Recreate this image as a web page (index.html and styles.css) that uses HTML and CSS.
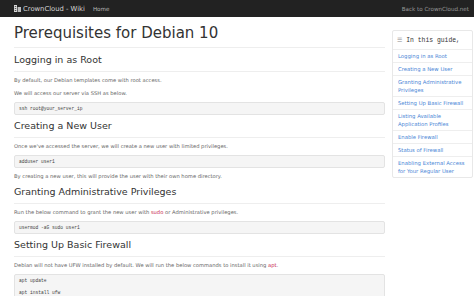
FILE: index.html
```html
<!DOCTYPE html>
<html lang="en">
<head>
    <meta charset="UTF-8">
    <meta name="viewport" content="width=device-width, initial-scale=1.0">
    <title>Prerequisites for Debian 10 - CrownCloud Wiki</title>
    <link rel="stylesheet" href="styles.css">
</head>
<body>
    <nav class="navbar">
        <a class="brand" href="#">
            <svg class="brand-icon" width="7" height="7" viewBox="0 0 7 7">
                <rect x="0" y="0" width="3" height="7" fill="#d8d8d8"/>
                <rect x="3.6" y="2" width="3.4" height="5" fill="#bdbdbd"/>
                <rect x="0.8" y="1" width="1.4" height="1" fill="#555"/>
                <rect x="0.8" y="3" width="1.4" height="1" fill="#555"/>
                <rect x="0.8" y="5" width="1.4" height="1" fill="#555"/>
            </svg>
            <span>CrownCloud - Wiki</span>
        </a>
        <a class="nav-link" href="#">Home</a>
        <a class="nav-link nav-right" href="#">Back to CrownCloud.net</a>
    </nav>

    <div class="page">
        <main class="content">
            <h1>Prerequisites for Debian 10</h1>

            <h2>Logging in as Root</h2>
            <p>By default, our Debian templates come with root access.</p>
            <p>We will access our server via SSH as below.</p>
            <pre>ssh root@your_server_ip</pre>

            <h2>Creating a New User</h2>
            <p>Once we've accessed the server, we will create a new user with limited privileges.</p>
            <pre>adduser user1</pre>
            <p>By creating a new user, this will provide the user with their own home directory.</p>

            <h2>Granting Administrative Privileges</h2>
            <p>Run the below command to grant the new user with <code>sudo</code> or Administrative privileges.</p>
            <pre>usermod -aG sudo user1</pre>

            <h2>Setting Up Basic Firewall</h2>
            <p>Debian will not have UFW installed by default. We will run the below commands to install it using <code>apt</code>.</p>
            <pre class="multi">apt update

apt install ufw</pre>
        </main>

        <aside class="toc">
            <div class="toc-title"><span class="toc-icon">&#9776;</span> In this guide,</div>
            <ul>
                <li><a href="#">Logging in as Root</a></li>
                <li><a href="#">Creating a New User</a></li>
                <li><a href="#">Granting Administrative Privileges</a></li>
                <li><a href="#">Setting Up Basic Firewall</a></li>
                <li><a href="#">Listing Available Application Profiles</a></li>
                <li><a href="#">Enable Firewall</a></li>
                <li><a href="#">Status of Firewall</a></li>
                <li><a href="#">Enabling External Access for Your Regular User</a></li>
            </ul>
        </aside>
    </div>
</body>
</html>
```

FILE: styles.css
```css
body {
    margin: 0;
    font-family: "DejaVu Sans", sans-serif;
    color: #666;
    background: #fff;
    overflow: hidden;
}
a {
    text-decoration: none;
}
.navbar {
    height: 17px;
    background-color: #222;
    display: flex;
    align-items: center;
    padding: 0 5px 0 14px;
}
.brand {
    display: flex;
    align-items: center;
    gap: 2px;
    color: #d6d6d6;
    font-size: 6.8px;
}
.brand-icon {
    display: block;
}
.nav-link {
    color: #bbb;
    font-size: 5.6px;
    margin-left: 8px;
}
.nav-right {
    margin-left: auto;
    color: #999;
}
.page {
    display: flex;
    gap: 7px;
    padding: 0 3px 0 14px;
}
.content {
    width: 371px;
    flex: none;
}
h1 {
    font-size: 15px;
    font-weight: normal;
    color: #333;
    line-height: 20px;
    margin: 6px 0 0;
    padding-bottom: 4px;
    border-bottom: 1px solid #eee;
}
h2 {
    font-size: 9.5px;
    font-weight: normal;
    color: #333;
    line-height: 14px;
    margin: 4px 0 4px;
    padding-bottom: 4px;
    border-bottom: 1px solid #eee;
}
h1 + h2 {
    margin-top: 5px;
}
p {
    font-size: 5.2px;
    line-height: 8px;
    margin: 0 0 5px;
}
pre {
    font-family: "Liberation Mono", monospace;
    font-size: 4.6px;
    line-height: 11px;
    color: #444;
    background: #f5f5f5;
    border: 1px solid #e3e3e3;
    border-radius: 2px;
    padding: 0 4px;
    margin: 0 0 4px;
}
pre.multi {
    line-height: 6px;
    padding: 3px 4px;
}
code {
    font-family: "DejaVu Sans", sans-serif;
    color: #c7254e;
    font-size: 5.2px;
}
.toc {
    width: 79px;
    flex: none;
    margin-top: 13px;
    align-self: flex-start;
    border: 1px solid #e8e8e8;
    border-radius: 2px;
}
.toc-title {
    font-family: "Liberation Mono", monospace;
    font-size: 6.4px;
    color: #333;
    line-height: 17px;
    padding-left: 4px;
    white-space: nowrap;
}
.toc-icon {
    font-family: "DejaVu Sans", sans-serif;
    color: #888;
    font-size: 6px;
}
.toc ul {
    list-style: none;
    margin: 0;
    padding: 0;
}
.toc li {
    border-top: 1px solid #eee;
    padding: 2px 4px 2px 5px;
    line-height: 8px;
    font-size: 5.3px;
}
.toc li a {
    color: #4a86d6;
}
```
